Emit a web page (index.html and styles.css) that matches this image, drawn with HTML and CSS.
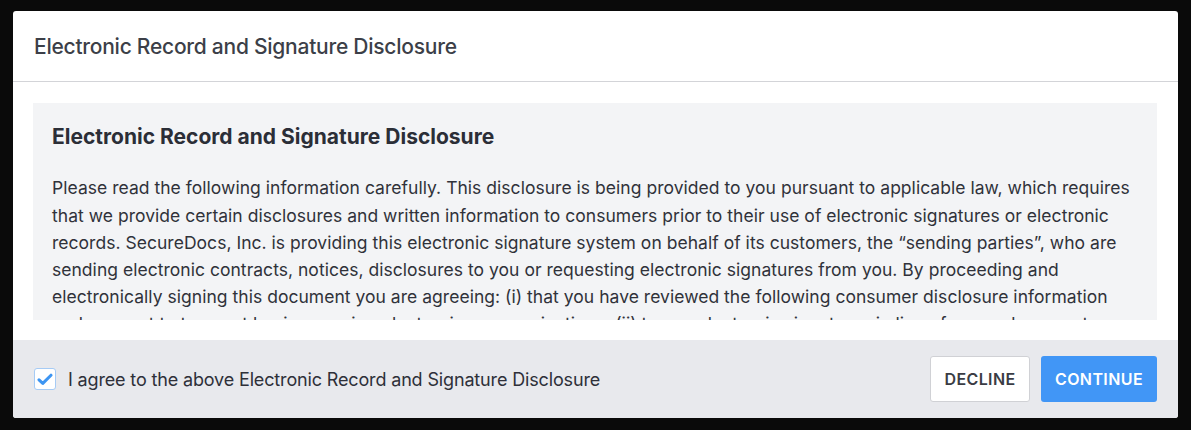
FILE: index.html
```html
<!DOCTYPE html>
<html>
<head>
<meta charset="utf-8">
<link rel="stylesheet" href="styles.css">
</head>
<body>
<div class="modal">
  <div class="modal-header">
    <h1 class="modal-title">Electronic Record and Signature Disclosure</h1>
  </div>
  <div class="modal-body">
    <div class="disclosure">
      <h2 class="disclosure-title">Electronic Record and Signature Disclosure</h2>
      <p class="disclosure-text">Please read the following information carefully. This disclosure is being provided to you pursuant to applicable law, which requires that we provide certain disclosures and written information to consumers prior to their use of electronic signatures or electronic records. SecureDocs, Inc. is providing this electronic signature system on behalf of its customers, the “sending parties”, who are sending electronic contracts, notices, disclosures to you or requesting electronic signatures from you. By proceeding and electronically signing this document you are agreeing: (i) that you have reviewed the following consumer disclosure information and consent to transact business using electronic communications, (ii) to use electronic signatures in lieu of paper documents, and (iii) to receive notices and disclosures electronically.</p>
    </div>
  </div>
  <div class="modal-footer">
    <label class="agree">
      <span class="checkbox">
        <svg width="16" height="13" viewBox="0 0 16 13"><path d="M2 6.8 L5.8 10.4 L14 2.2" fill="none" stroke="#3d95f2" stroke-width="3" stroke-linecap="round" stroke-linejoin="round"/></svg>
      </span>
      <span class="agree-text">I agree to the above Electronic Record and Signature Disclosure</span>
    </label>
    <div class="actions">
      <button class="btn btn-decline">DECLINE</button>
      <button class="btn btn-continue">CONTINUE</button>
    </div>
  </div>
</div>
</body>
</html>
```

FILE: styles.css
```css
html, body {
  margin: 0;
  background: #0a0a0a;
}
body {
  padding: 11px 13px;
  font-family: Inter, "Noto Sans", "Liberation Sans", sans-serif;
  color: #2e3039;
}
.modal {
  width: 1165px;
  height: 407px;
  background: #fff;
  border-radius: 3px;
  overflow: hidden;
  display: flex;
  flex-direction: column;
}
.modal-header {
  height: 70px;
  border-bottom: 1px solid #d3d4d8;
  display: flex;
  align-items: center;
  padding: 0 21px;
  flex: none;
}
.modal-title {
  margin: 0;
  font-size: 21px;
  font-weight: 500;
  color: #3c3f48;
  letter-spacing: -0.25px;
}
.modal-body {
  padding: 21px 21px 20px 20px;
  flex: none;
}
.disclosure {
  height: 217px;
  background: #f3f4f6;
  overflow: hidden;
  padding: 0 19px;
}
.disclosure-title {
  margin: 19px 0 0;
  font-size: 21px;
  font-weight: 700;
  line-height: 30px;
  color: #2b2e37;
  letter-spacing: 0;
}
.disclosure-text {
  margin: 22.4px 0 0;
  font-size: 17.5px;
  line-height: 27.2px;
  color: #30323a;
  letter-spacing: 0.03px;
}
.modal-footer {
  flex: 1;
  background: #e8e9ed;
  display: flex;
  align-items: center;
  justify-content: space-between;
  padding: 0 21px 0 21px;
}
.agree {
  display: flex;
  align-items: center;
  gap: 12px;
}
.checkbox {
  width: 20px;
  height: 20px;
  border: 1px solid #a6cbf5;
  border-radius: 3px;
  background: #fff;
  display: flex;
  align-items: center;
  justify-content: center;
}
.agree-text {
  font-size: 18px;
  color: #2e3039;
  letter-spacing: -0.15px;
}
.actions {
  display: flex;
  gap: 11px;
}
.btn {
  height: 46px;
  border-radius: 3px;
  font-family: inherit;
  font-size: 16px;
  font-weight: 600;
  letter-spacing: 0.4px;
  cursor: pointer;
}
.btn-decline {
  width: 100px;
  background: #fff;
  border: 1px solid #d0d1d5;
  color: #3a3c44;
}
.btn-continue {
  width: 116px;
  background: #4196f6;
  border: none;
  color: #fff;
}
```
